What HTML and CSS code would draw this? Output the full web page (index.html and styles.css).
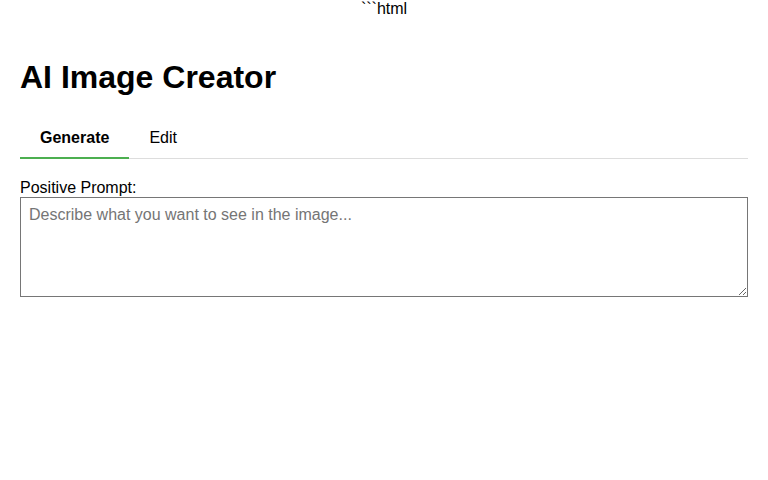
FILE: index.html
```html
<!DOCTYPE html>
<html lang="en">
<head>
<meta charset="utf-8">
<title>AI Image Creator</title>
<link rel="stylesheet" href="styles.css">
</head>
<body>
<div class="stray">```html</div>
<div class="container">
  <h1 class="title">AI Image Creator</h1>
  <div class="tabs">
    <button class="tab active">Generate</button>
    <button class="tab">Edit</button>
  </div>
  <div class="panel">
    <label class="label" for="prompt">Positive Prompt:</label>
    <textarea id="prompt" class="prompt" placeholder="Describe what you want to see in the image..."></textarea>
  </div>
</div>
</body>
</html>
```
FILE: styles.css
```css
html, body {
  margin: 0;
  padding: 0;
  background: #fff;
  color: #000;
  font-family: "Liberation Sans", Arial, sans-serif;
  font-size: 16px;
}

.stray {
  text-align: center;
}

.container {
  padding: 20px;
}

.title {
  font-size: 32px;
  font-weight: bold;
  margin: 21.44px 0 22.44px;
}

.tabs {
  display: flex;
  border-bottom: 1px solid #ddd;
}

.tab {
  font-family: "Liberation Sans", Arial, sans-serif;
  font-size: 16px;
  color: #000;
  background: none;
  border: none;
  border-bottom: 2px solid transparent;
  margin-bottom: -1px;
  padding: 10px 20px;
  line-height: normal;
  cursor: pointer;
}

.tab.active {
  font-weight: bold;
  border-bottom-color: #4caf50;
}

.panel {
  margin-top: 20px;
}

.label {
  display: block;
}

.prompt {
  display: block;
  box-sizing: border-box;
  width: 100%;
  height: 100px;
  padding: 8px;
  margin: 0;
  border: 1px solid #767676;
  font-family: "Liberation Sans", Arial, sans-serif;
  font-size: 16px;
}

.prompt::placeholder {
  color: #757575;
}
```
